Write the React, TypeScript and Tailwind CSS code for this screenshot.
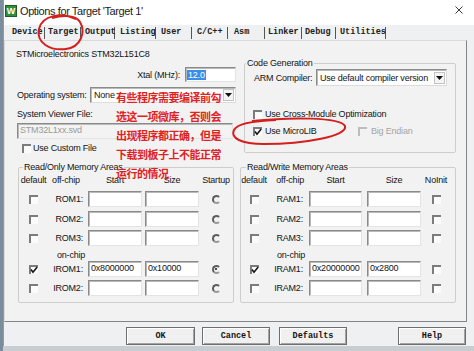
import React from "react";

const ui = "font-['Liberation_Sans',Arial,sans-serif]";
const mono = "font-['Liberation_Mono',monospace] font-bold";

const tabs = [
  { label: "Device", cls: "w-[41px] pl-[8px]" },
  { label: "Target", cls: "w-[36px] pl-[3px]" },
  { label: "Output", cls: "w-[34px] pl-[4px]" },
  { label: "Listing", cls: "w-[41px] pl-[5px]" },
  { label: "User", cls: "w-[36px] pl-[5px]" },
  { label: "C/C++", cls: "w-[36px] pl-[5px]" },
  { label: "Asm", cls: "w-[37px] pl-[6px]" },
  { label: "Linker", cls: "w-[37px] pl-[3px]" },
  { label: "Debug", cls: "w-[34px] pl-[3px]" },
  { label: "Utilities", cls: "w-[50px] pl-[4px]" },
];

function Check({ on = false, off = false }: { on?: boolean; off?: boolean }) {
  return (
    <span
      className={`relative block shrink-0 w-[9px] h-[9px] border-t-2 border-l-2 ${
        off ? "border-[#bdbdbd] bg-[#f2f2f2]" : "border-[#7c7c7c] bg-[#fbfbfb]"
      }`}
    >
      {on && (
        <svg className="absolute left-[-1px] top-[-1px]" width="8" height="8" viewBox="0 0 8 8">
          <path d="M1 3.5 L3 6.2 L7.2 1" stroke="#151515" strokeWidth="1.6" fill="none" />
        </svg>
      )}
    </span>
  );
}

function Radio({ on = false }: { on?: boolean }) {
  return (
    <span className="relative block w-[9px] h-[9px] rounded-full border-2 border-t-[#5e5e5e] border-l-[#5e5e5e] border-b-[#9a9a9a] border-r-transparent">
      {on && <span className="absolute left-[1.5px] top-[1.5px] w-[2px] h-[2px] rounded-full bg-[#111]" />}
    </span>
  );
}

function Edit({ value = "", className = "", off = false }: { value?: string; className?: string; off?: boolean }) {
  return (
    <div
      className={`h-[16px] shrink-0 border border-t-[#8a8a8a] border-l-[#8a8a8a] border-r-[#e4e4e4] border-b-[#e4e4e4] shadow-[inset_1px_1px_0_#b9b9b9] pl-[2px] leading-[12px] whitespace-nowrap ${
        off ? "bg-[#f3f3f3] text-[#9a9a9a]" : "bg-white"
      } ${className}`}
    >
      {value}
    </div>
  );
}

function Combo({ value, className = "" }: { value: string; className?: string }) {
  return (
    <div
      className={`flex items-center shrink-0 bg-white border border-t-[#8a8a8a] border-l-[#8a8a8a] border-r-[#dcdcdc] border-b-[#dcdcdc] shadow-[inset_1px_1px_0_#b9b9b9] ${className}`}
    >
      <span className="flex-1 pl-[3px] whitespace-nowrap">{value}</span>
      <span className="mr-[1px] w-[11px] h-[12px] flex items-center justify-center border border-[#c4c4c4] bg-[#f4f4f4]">
        <svg width="7" height="4" viewBox="0 0 7 4">
          <path d="M0 0 H7 L3.5 4 Z" fill="#111" />
        </svg>
      </span>
    </div>
  );
}

function Button({ label, className }: { label: string; className: string }) {
  return (
    <div
      className={`h-[18px] flex items-center justify-center border border-[#6e6e6e] bg-[#f0f0f0] shadow-[inset_1px_1px_0_#ffffff,inset_-1px_-1px_0_#a3a3a3] ${mono} text-[8.5px] tracking-normal ${className}`}
    >
      {label}
    </div>
  );
}

type Row = { label: string; start?: string; size?: string; on?: boolean };

function MemRow({ row, ram }: { row: Row; ram: boolean }) {
  return (
    <div className="flex items-center h-[16px]">
      <div className={ram ? "w-[26px] flex justify-center" : "w-[29px] flex justify-center"}>
        <Check on={row.on} />
      </div>
      <div className={ram ? "w-[38px] text-right pr-[2px]" : "w-[36px] text-right pr-[1px]"}>{row.label}:</div>
      <Edit className={ram ? "ml-[4px] w-[53px]" : "ml-[4px] w-[54px]"} value={row.start} />
      <Edit className={ram ? "ml-[5px] w-[54px]" : "ml-[3px] w-[54px]"} value={row.size} />
      <div className={ram ? "w-[30px] flex justify-center" : "w-[34px] flex justify-center"}>
        {ram ? <Check /> : <Radio on={row.on} />}
      </div>
    </div>
  );
}

function MemArea({ ram }: { ram: boolean }) {
  const p = ram ? "RAM" : "ROM";
  const off: Row[] = [{ label: p + "1" }, { label: p + "2" }, { label: p + "3" }];
  const on: Row[] = ram
    ? [{ label: "IRAM1", start: "0x20000000", size: "0x2800", on: true }, { label: "IRAM2" }]
    : [{ label: "IROM1", start: "0x8000000", size: "0x10000", on: true }, { label: "IROM2" }];
  return (
    <fieldset className="w-[216px] border border-[#cdcdcd] rounded-[2px] pb-[6px]">
      <legend className={ram ? "ml-[5px] px-[1px] leading-[12px]" : "ml-[4px] px-[1px] leading-[12px]"}>
        {ram ? "Read/Write Memory Areas" : "Read/Only Memory Areas"}
      </legend>
      <div className="mt-[1px] flex items-center h-[12px] whitespace-nowrap">
        <div className={ram ? "w-[26px] text-center" : "w-[29px] text-center"}>default</div>
        <div className={ram ? "w-[38px] text-right pr-[1px]" : "w-[36px] text-center"}>off-chip</div>
        <div className={ram ? "ml-[4px] w-[53px] text-center" : "ml-[4px] w-[54px] text-center"}>Start</div>
        <div className={ram ? "ml-[5px] w-[54px] text-center" : "ml-[3px] w-[54px] text-center"}>Size</div>
        <div className={ram ? "w-[30px] text-center" : "w-[34px] text-center"}>{ram ? "NoInit" : "Startup"}</div>
      </div>
      <div className="mt-[5px]">
        <MemRow row={off[0]} ram={ram} />
      </div>
      <div className="mt-[4px]">
        <MemRow row={off[1]} ram={ram} />
      </div>
      <div className="mt-[3px]">
        <MemRow row={off[2]} ram={ram} />
      </div>
      <div className={ram ? "mt-[3px] h-[12px] pl-[36px]" : "mt-[3px] h-[12px] pl-[38px]"}>on-chip</div>
      <MemRow row={on[0]} ram={ram} />
      <div className="mt-[3px]">
        <MemRow row={on[1]} ram={ram} />
      </div>
    </fieldset>
  );
}

export default function App() {
  return (
    <div className={`relative w-[474px] h-[351px] overflow-hidden flex bg-[#c8cdd2] ${ui} text-[9px] leading-[12px] tracking-[-0.2px] text-[#141414]`}>
      <div className="w-[3px] shrink-0 bg-[#7b8c9c]" />
      <div className="flex-1 h-[346px] flex flex-col border-l border-[#8f9aa4] bg-[#eef0f1]">
        {/* title bar */}
        <div className="h-[25px] shrink-0 bg-white flex items-center pl-[1px] pr-[11px]">
          <span className="w-[12px] h-[12px] mt-[-3px] flex items-center justify-center bg-[#2f8f3c] border border-[#1d5e27] text-white text-[9px] font-bold leading-none tracking-normal">
            W
          </span>
          <span className="ml-[3px] mt-[-3px] text-[11px] leading-[14px] tracking-[-0.4px] text-[#1a1a1a]">
            Options for Target 'Target 1'
          </span>
          <span className="flex-1" />
          <svg className="mt-[-5px]" width="8" height="8" viewBox="0 0 8 8">
            <path d="M0.5 0.5 L7.5 7.5 M7.5 0.5 L0.5 7.5" stroke="#3a3a3a" strokeWidth="1" />
          </svg>
        </div>

        {/* tabs */}
        <div className={`h-[15px] shrink-0 flex items-center ${mono} text-[8.5px] leading-[11px] tracking-normal text-[#202020]`}>
          {tabs.map((t) => (
            <div key={t.label} className={`h-[12px] border-r border-[#555] whitespace-nowrap ${t.cls}`}>
              {t.label}
            </div>
          ))}
        </div>

        {/* page */}
        <div className="w-[463px] h-[282px] shrink-0 border border-t-[#dadada] border-l-[#dadada] border-r-[#858585] border-b-[#858585] bg-[#f2f2f2] pl-[11px]">
          <div className="flex gap-[8px] h-[113px]">
            <div className="w-[220px]">
              <div className="mt-[7px] h-[12px]">STMicroelectronics STM32L151C8</div>
              <div className="mt-[7px] h-[15px] flex justify-end items-center gap-[5px]">
                <span>Xtal (MHz):</span>
                <div className="w-[51px] h-[15px] bg-white border border-t-[#8a8a8a] border-l-[#8a8a8a] border-r-[#e4e4e4] border-b-[#e4e4e4] shadow-[inset_1px_1px_0_#b9b9b9] pl-[1px] pt-[1px]">
                  <span className="px-[1px] bg-[#3a8ee8] text-white">12.0</span>
                </div>
              </div>
              <div className="mt-[5px] h-[16px] flex items-center">
                <span className="pl-[1px] w-[74px] whitespace-nowrap">Operating system:</span>
                <Combo value="None" className="w-[146px] h-[16px]" />
              </div>
              <div className="mt-[5px] h-[12px] pl-[1px]">System Viewer File:</div>
              <div className="mt-[3px]">
                <Edit off value="STM32L1xx.svd" className="ml-[1px] w-[216px]" />
              </div>
              <div className="mt-[3px] h-[12px] flex items-center pl-[6px] gap-[2px]">
                <Check />
                <span>Use Custom File</span>
              </div>
            </div>

            <fieldset className="mt-[16px] w-[212px] h-[96px] border border-[#cdcdcd] rounded-[2px]">
              <legend className="ml-[1px] px-[1px] leading-[12px]">Code Generation</legend>
              <div className="h-[17px] flex items-center pl-[9px]">
                <span className="w-[62px] whitespace-nowrap">ARM Compiler:</span>
                <Combo value="Use default compiler version" className="w-[131px] h-[17px]" />
              </div>
              <div className="mt-[22px] h-[12px] flex items-center pl-[8px] gap-[3px]">
                <Check />
                <span>Use Cross-Module Optimization</span>
              </div>
              <div className="mt-[5px] h-[12px] flex items-center pl-[8px]">
                <Check on />
                <span className="ml-[3px] w-[93px]">Use MicroLIB</span>
                <Check off />
                <span className="ml-[4px] text-[#a5a5a5]">Big Endian</span>
              </div>
            </fieldset>
          </div>

          <div className="mt-[7px] flex gap-[6px] pl-[2px]">
            <MemArea ram={false} />
            <MemArea ram />
          </div>
        </div>

        {/* buttons */}
        <div className="flex pt-[5px] pl-[122px]">
          <Button label="OK" className="w-[69px]" />
          <Button label="Cancel" className="ml-[7px] w-[68px]" />
          <Button label="Defaults" className="ml-[9px] w-[68px]" />
          <Button label="Help" className="ml-[51px] w-[68px]" />
        </div>
      </div>

      {/* red annotation */}
      <div className="absolute left-[116px] top-[88px] font-['Noto_Sans_CJK_SC',sans-serif] font-bold text-[11px] leading-[19px] tracking-[-0.5px] text-[#e0221f]">
        <div>有些程序需要编译前勾</div>
        <div>选这一项微库，否则会</div>
        <div>出现程序都正确，但是</div>
        <div>下载到板子上不能正常</div>
        <div>运行的情况</div>
      </div>
      <svg className="absolute left-0 top-0 pointer-events-none" width="474" height="351" viewBox="0 0 474 351">
        <path
          d="M76 19 C62 12 42 15 39 29 C36 43 50 51 66 49 C81 47 86 32 80 22 C76 15 63 15 52 18"
          stroke="#d3201f"
          strokeWidth="2"
          fill="none"
        />
        <path
          d="M252 121 C290 117 340 117 345 126 C348 136 305 144 264 144 C241 144 230 138 234 130 C237 124 250 121 276 120"
          stroke="#d3201f"
          strokeWidth="2"
          fill="none"
        />
      </svg>
    </div>
  );
}
